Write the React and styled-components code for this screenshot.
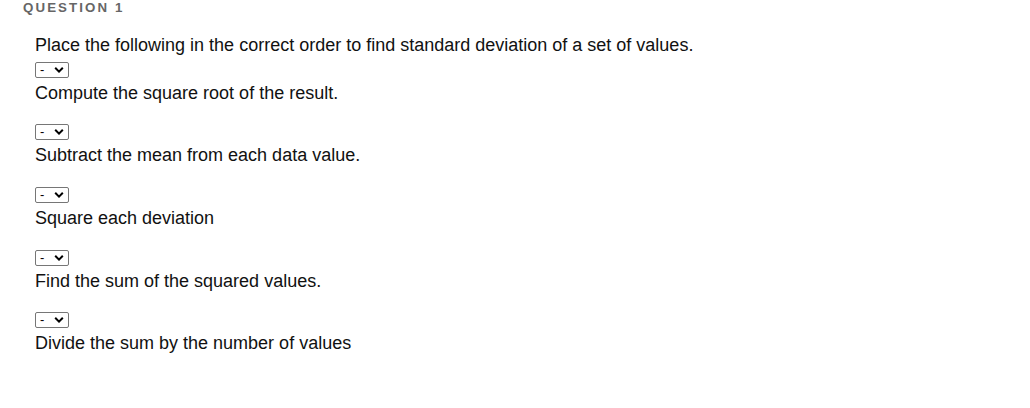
import React from "react";
import styled, { createGlobalStyle } from "styled-components";

const GlobalStyle = createGlobalStyle`
  body { margin: 0; background: #fff; overflow: hidden; }
`;
const Page = styled.main`
  height: 408px;
  overflow: hidden;
  font-family: "Liberation Sans", Arial, sans-serif;
  color: #111;
`;
const Heading = styled.h1`
  margin: 0 0 0 23px;
  height: 34px;
  font-size: 13.3px;
  line-height: 15px;
  letter-spacing: 2.1px;
  color: #666;
`;
const Prompt = styled.p`
  margin: 0 0 0 35px;
  height: 27.8px;
  font-size: 18px;
  line-height: 22px;
`;
const List = styled.div`
  margin-left: 35px;
`;
const Item = styled.div`
  height: 62.6px;
  display: flex;
  flex-direction: column;
  align-items: flex-start;
`;
const Picker = styled.button`
  box-sizing: border-box;
  display: flex;
  align-items: center;
  justify-content: space-between;
  width: 34px;
  height: 16px;
  padding: 0 4px;
  border: 1px solid #767676;
  border-radius: 2px;
  background: #fff;
  color: #000;
  font: 13px/14px "Liberation Sans", Arial, sans-serif;
`;
const Arrow = styled.svg`
  display: block;
  width: 10px;
  height: 6px;
  fill: none;
  stroke: #000;
  stroke-width: 2;
`;
const Label = styled.div`
  margin-top: 4px;
  font-size: 18px;
  line-height: 22px;
`;
const steps = [
  "Compute the square root of the result.",
  "Subtract the mean from each data value.",
  "Square each deviation",
  "Find the sum of the squared values.",
  "Divide the sum by the number of values",
];

export default function App() {
  return (
    <Page>
      <GlobalStyle />
      <Heading>QUESTION 1</Heading>
      <Prompt>Place the following in the correct order to find standard deviation of a set of values.</Prompt>
      <List>
        {steps.map((s) => (
          <Item key={s}>
            <Picker aria-label={s}>
              <span>-</span>
              <Arrow viewBox="0 0 10 6">
                <path d="M1.2 0.8L5 4.6L8.8 0.8" />
              </Arrow>
            </Picker>
            <Label>{s}</Label>
          </Item>
        ))}
      </List>
    </Page>
  );
}
